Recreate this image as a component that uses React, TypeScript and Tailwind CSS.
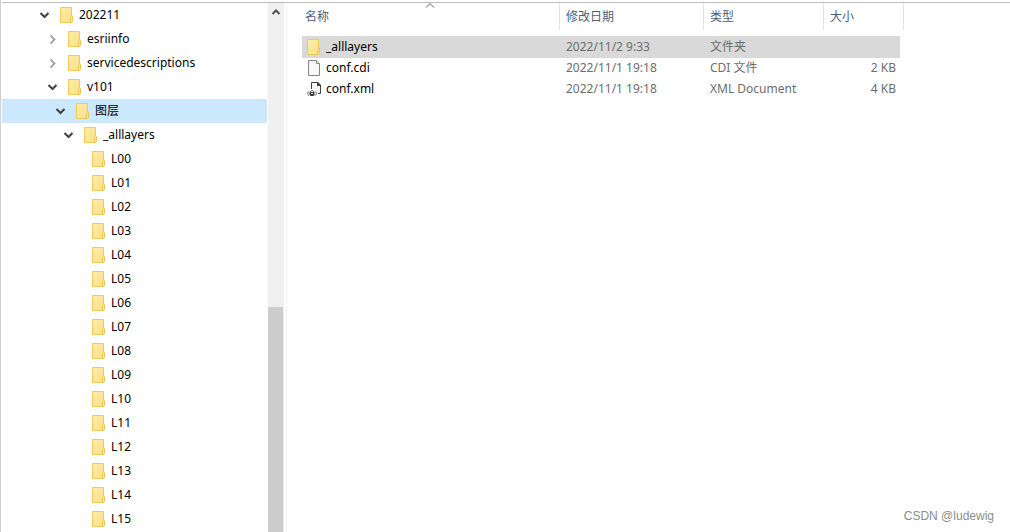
import React from "react";

type TreeNode = { name: string; level: number; state?: "open" | "closed"; selected?: boolean };

const levels = Array.from({ length: 16 }, (_, i) => "L" + String(i).padStart(2, "0"));

const nodes: TreeNode[] = [
  { name: "202211", level: 0, state: "open" },
  { name: "esriinfo", level: 1, state: "closed" },
  { name: "servicedescriptions", level: 1, state: "closed" },
  { name: "v101", level: 1, state: "open" },
  { name: "图层", level: 2, state: "open", selected: true },
  { name: "_alllayers", level: 3, state: "open" },
  ...levels.map((name) => ({ name, level: 4 })),
];

const indents = ["pl-[34px]", "pl-[42px]", "pl-[50px]", "pl-[58px]", "pl-[66px]"];

const files = [
  { name: "_alllayers", date: "2022/11/2 9:33", type: "文件夹", size: "", icon: FolderIcon, selected: true },
  { name: "conf.cdi", date: "2022/11/1 19:18", type: "CDI 文件", size: "2 KB", icon: FileIcon, selected: false },
  { name: "conf.xml", date: "2022/11/1 19:18", type: "XML Document", size: "4 KB", icon: XmlIcon, selected: false },
];

function FolderIcon() {
  return (
    <svg width="14" height="16" viewBox="0 0 14 16" className="shrink-0" aria-hidden="true">
      <defs>
        <linearGradient id="folder" x1="0" y1="0" x2="1" y2="1">
          <stop offset="0" stopColor="#ffeba9" />
          <stop offset="1" stopColor="#fee08a" />
        </linearGradient>
      </defs>
      <path d="M.5.5h11v15H.5z" fill="url(#folder)" stroke="#eeca58" />
      <path d="M10.5 15.5v-5l1-1h1v5l-1 1z" fill="#ffe699" stroke="#eac54f" />
    </svg>
  );
}

function FileIcon() {
  return (
    <svg width="14" height="16" viewBox="0 0 14 16" className="shrink-0" aria-hidden="true">
      <path d="M1.5.5h8l3 3v12h-11z" fill="#f8f8f8" stroke="#858585" />
      <path d="M9.5.5v3h3" fill="#fff" stroke="#858585" />
    </svg>
  );
}

function XmlIcon() {
  return (
    <svg width="14" height="16" viewBox="0 0 14 16" className="shrink-0" aria-hidden="true">
      <path d="M4.5 8V1.5h6l3 3v8H11" fill="#f6f6f6" stroke="#3f3f3f" />
      <path d="M10 1v4h4V4l-3-3z" fill="#3f3f3f" />
      <path d="M1.5 10.500 .5 12.500l1 2M8.500 10.500l1 2-1 2" fill="none" stroke="#5a5a5a" />
      <path d="M3.5 11.500v-1l1-1h1l1 1v1" fill="#fff" stroke="#3f3f3f" />
      <path d="M2.500 11h5v3l-1 1h-3l-1-1z" fill="#3f3f3f" />
      <path d="M4 12.500h2" stroke="#d8d8d8" />
    </svg>
  );
}

function Chevron({ state }: { state: "open" | "closed" }) {
  return (
    <svg width="16" height="16" viewBox="0 0 16 16" fill="none" strokeWidth="2" aria-hidden="true">
      {state === "open" ? (
        <path d="m4.500 6 4 4 4-4" stroke="#404040" />
      ) : (
        <path d="m6.500 4.500 4 4-4 4" stroke="#a6a6a6" />
      )}
    </svg>
  );
}

function Tree() {
  return (
    <nav aria-label="文件夹" className="min-w-0 flex-1 overflow-hidden px-px">
      <ul>
        {nodes.map((n) => (
          <li key={n.name + n.level}>
            <button
              type="button"
              aria-expanded={n.state ? n.state === "open" : undefined}
              className={`flex h-6 w-full items-center text-left ${indents[n.level]} ${n.selected ? "bg-[#cce8ff]" : ""}`}
            >
              <span className="w-6 shrink-0">{n.state && <Chevron state={n.state} />}</span>
              <FolderIcon />
              <span className="pl-[5px] whitespace-nowrap">{n.name}</span>
            </button>
          </li>
        ))}
      </ul>
    </nav>
  );
}

function ScrollBar() {
  return (
    <div className="flex w-4 shrink-0 flex-col bg-[#f0f0f0]" aria-hidden="true">
      <div className="flex h-[18px] items-center justify-center">
        <svg width="10" height="8" viewBox="0 0 10 8" fill="none" stroke="#505050" strokeWidth="2">
          <path d="m1.500 6 3.500-3.500L8.500 6" />
        </svg>
      </div>
      <div className="basis-[286px]" />
      <div className="w-[15px] flex-1 bg-[#cdcdcd]" />
    </div>
  );
}

function FileTable() {
  const head = "border-r border-[#e3e3e3] p-0 text-left font-normal";
  return (
    <table className="w-[602px] table-fixed border-separate border-spacing-0">
      <colgroup>
        <col className="w-[258px]" />
        <col className="w-36" />
        <col className="w-[120px]" />
        <col className="w-[76px]" />
        <col className="w-1" />
      </colgroup>
      <thead className="text-[#4c607a]">
        <tr className="h-[27px]">
          <th className={`relative ${head}`} aria-sort="ascending">
            <button type="button" className="pl-[3px]">名称</button>
            <svg className="absolute top-0 left-1/2 -ml-1.5" width="10" height="5" viewBox="0 0 10 5" fill="none" stroke="#5d5d5d" aria-hidden="true">
              <path d="m1 4.500 4-4 4 4" />
            </svg>
          </th>
          <th className={head}><button type="button" className="pl-1.5">修改日期</button></th>
          <th className={head}><button type="button" className="pl-1.5">类型</button></th>
          <th className={head} colSpan={2}><button type="button" className="pl-1.5">大小</button></th>
        </tr>
      </thead>
      <tbody className="text-[#6d6d6d]">
        <tr className="h-1.5" aria-hidden="true"><td colSpan={5} className="p-0" /></tr>
        {files.map((f) => {
          const cell = f.selected ? "bg-[#d9d9d9] p-0" : "p-0 pb-0.5";
          return (
            <tr key={f.name} className={f.selected ? "h-[22px]" : "h-[21px]"}>
              <td className={cell}>
                <span className="flex items-center gap-1 pl-[5px] text-black">
                  <f.icon />
                  <span className="pl-px">{f.name}</span>
                </span>
              </td>
              <td className={`${cell} pl-1.5!`}>{f.date}</td>
              <td className={`${cell} pl-1.5!`}>{f.type}</td>
              <td className={`${cell} pr-1! text-right`}>{f.size}</td>
              <td className="p-0" />
            </tr>
          );
        })}
      </tbody>
    </table>
  );
}

export default function App() {
  return (
    <div className="relative flex h-screen flex-col overflow-hidden border-l border-[#cfcfcf] bg-white font-['Noto_Sans','Noto_Sans_CJK_SC',sans-serif] text-[12px] leading-4 text-black">
      <div className="mt-0.5 ml-px h-px shrink-0 bg-[#bcbcbc]" />
      <div className="flex min-h-0 flex-1">
        <aside className="flex w-[283px] shrink-0">
          <Tree />
          <ScrollBar />
        </aside>
        <main className="ml-0.5 min-w-0 flex-1 border-l border-[#f5f5f5] pl-[15px]">
          <FileTable />
        </main>
      </div>
      <p className="absolute right-4 bottom-2 font-['Liberation_Sans',sans-serif] text-[12px] text-[#8c8c8c]">CSDN @ludewig</p>
    </div>
  );
}
